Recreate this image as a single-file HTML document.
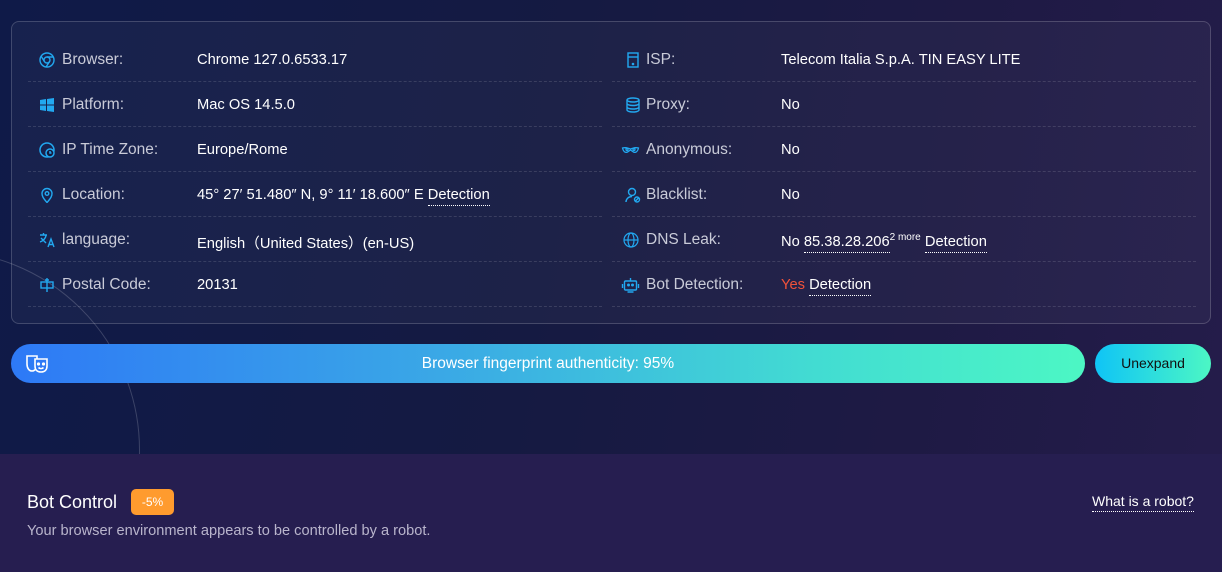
<!DOCTYPE html>
<html><head><meta charset="utf-8"><style>
*{margin:0;padding:0;box-sizing:border-box}
html,body{width:1222px;height:572px;overflow:hidden}
body{font-family:"Liberation Sans",sans-serif;background:#141a3e;position:relative}
.top{position:absolute;left:0;top:0;width:1222px;height:454px;overflow:hidden;background:linear-gradient(100deg,#0f1a48 0%,#151a42 45%,#1e1a44 75%,#241c4a 100%)}
.arc{position:absolute;left:-260px;top:250px;width:400px;height:400px;border:1px solid rgba(255,255,255,.18);border-radius:50%}
.card{position:absolute;left:11px;top:21px;width:1200px;height:303px;border:1px solid rgba(255,255,255,.18);border-radius:8px;background:rgba(255,255,255,.035)}
.row{position:absolute;height:45px;border-bottom:1px dashed rgba(255,255,255,.13);font-size:14.7px;color:#fff}
.row .ic{position:absolute;left:11px;top:15px;width:16px;height:16px}
.row .lb{position:absolute;left:34px;top:14px;color:#c9cbd8;font-size:15.5px}
.row .v{position:absolute;top:15px}
.det{border-bottom:1px dotted #fff;padding-bottom:2px}
.bar{position:absolute;left:11px;top:344px;width:1074px;height:39px;border-radius:20px;background:linear-gradient(90deg,#2e79f6,#3aa8e6 40%,#42dcd2 75%,#4cf7c4);color:#fff;font-size:15.5px;text-align:center;line-height:39px}
.btn{position:absolute;left:1095px;top:344px;width:116px;height:39px;border-radius:20px;background:linear-gradient(90deg,#0fc4f6,#4cf7c4);color:#111;font-size:14px;text-align:center;line-height:39px}
.bot{position:absolute;left:0;top:454px;width:1222px;height:118px;background:#261e50}
</style></head><body>
<div class="top"><div class="arc"></div></div>
<div class="card">
<div class="row" style="left:16px;top:15px;width:574px"><svg class="ic" viewBox="0 0 16 16" fill="none" stroke="#22a8f0" stroke-width="1.4"><circle cx="8" cy="8" r="7"/><circle cx="8" cy="8" r="3"/><path d="M8 5h6.5M5.4 9.5L2 4M10.6 9.5L7 15"/></svg><span class="lb">Browser:</span><span class="v" style="left:169px">Chrome 127.0.6533.17</span></div>
<div class="row" style="left:16px;top:60px;width:574px"><svg class="ic" viewBox="0 0 16 16" fill="#22a8f0"><path d="M1 3l6-1v5.5H1zM8 2l7-1v6.5H8zM1 8.5h6V14l-6-1zM8 8.5h7V15l-7-1z"/></svg><span class="lb">Platform:</span><span class="v" style="left:169px">Mac OS 14.5.0</span></div>
<div class="row" style="left:16px;top:105px;width:574px"><svg class="ic" viewBox="0 0 16 16" fill="none" stroke="#22a8f0" stroke-width="1.5"><circle cx="8" cy="8" r="7"/><circle cx="11" cy="11" r="4" fill="#141a3e"/><path d="M11 9v2h1.5"/></svg><span class="lb">IP Time Zone:</span><span class="v" style="left:169px">Europe/Rome</span></div>
<div class="row" style="left:16px;top:150px;width:574px"><svg class="ic" viewBox="0 0 16 16" fill="none" stroke="#22a8f0" stroke-width="1.4"><path d="M8 15.5C4 11 3 9 3 6.5a5 5 0 0110 0C13 9 12 11 8 15.5z"/><circle cx="8" cy="6.5" r="1.8"/></svg><span class="lb">Location:</span><span class="v" style="left:169px">45° 27′ 51.480″ N, 9° 11′ 18.600″ E <span class="det">Detection</span></span></div>
<div class="row" style="left:16px;top:195px;width:574px"><svg class="ic" viewBox="0 0 16 16" fill="none" stroke="#22a8f0" stroke-width="1.4"><path d="M1 3h7M4.5 1v2M2 6l5 5M7 3c0 3-3 6-6 7M9 15l3-8 3 8M10 12.5h4"/></svg><span class="lb">language:</span><span class="v" style="left:169px">English（United States）(en-US)</span></div>
<div class="row" style="left:16px;top:240px;width:574px"><svg class="ic" viewBox="0 0 16 16" fill="none" stroke="#22a8f0" stroke-width="1.4"><rect x="2" y="5" width="12" height="6"/><path d="M8 1v14M6 3h4"/></svg><span class="lb">Postal Code:</span><span class="v" style="left:169px">20131</span></div>
<div class="row" style="left:600px;top:15px;width:584px"><svg class="ic" viewBox="0 0 16 16" fill="none" stroke="#22a8f0" stroke-width="1.4" style="left:13px"><rect x="3" y="1" width="10" height="14"/><path d="M3 5h10"/><circle cx="8" cy="12" r=".6" fill="#22a8f0"/></svg><span class="lb">ISP:</span><span class="v" style="left:169px">Telecom Italia S.p.A. TIN EASY LITE</span></div>
<div class="row" style="left:600px;top:60px;width:584px"><svg class="ic" viewBox="0 0 16 16" fill="none" stroke="#22a8f0" stroke-width="1.4" style="left:13px"><ellipse cx="8" cy="3" rx="6" ry="2"/><path d="M2 3v10c0 1.1 2.7 2 6 2s6-.9 6-2V3M2 6.5c0 1.1 2.7 2 6 2s6-.9 6-2M2 10c0 1.1 2.7 2 6 2s6-.9 6-2"/></svg><span class="lb">Proxy:</span><span class="v" style="left:169px">No</span></div>
<div class="row" style="left:600px;top:105px;width:584px"><svg class="ic" viewBox="0 0 18 16" fill="none" stroke="#22a8f0" stroke-width="1.3" style="left:9px;width:19px"><path d="M1 6c3-1 5 0 8 1 3-1 5-2 8-1-1 4-3 5-5 4L9 8 6 10C4 11 2 10 1 6z"/><circle cx="5.5" cy="7.5" r="1"/><circle cx="12.5" cy="7.5" r="1"/></svg><span class="lb">Anonymous:</span><span class="v" style="left:169px">No</span></div>
<div class="row" style="left:600px;top:150px;width:584px"><svg class="ic" viewBox="0 0 16 16" fill="none" stroke="#22a8f0" stroke-width="1.4" style="left:13px"><circle cx="7" cy="5" r="3.5"/><path d="M1 15c0-3 2.5-5.5 6-5.5"/><circle cx="12" cy="12.5" r="2.5"/><path d="M10.3 14.2l3.4-3.4"/></svg><span class="lb">Blacklist:</span><span class="v" style="left:169px">No</span></div>
<div class="row" style="left:600px;top:195px;width:584px"><svg class="ic" viewBox="0 0 16 16" fill="none" stroke="#22a8f0" stroke-width="1.2" style="left:11px"><circle cx="8" cy="8" r="7"/><ellipse cx="8" cy="8" rx="3" ry="7"/><path d="M1 8h14"/></svg><span class="lb">DNS Leak:</span><span class="v" style="left:169px">No <span class="det">85.38.28.206</span><sup style="font-size:10px">2 more</sup> <span class="det">Detection</span></span></div>
<div class="row" style="left:600px;top:240px;width:584px"><svg class="ic" viewBox="0 0 18 16" fill="none" stroke="#22a8f0" stroke-width="1.4" style="left:9px;width:19px"><rect x="3" y="4" width="12" height="9" rx="1"/><path d="M9 1v3M1 7v4M17 7v4M6 15h6"/><circle cx="7" cy="8" r=".8" fill="#22a8f0"/><circle cx="11" cy="8" r=".8" fill="#22a8f0"/></svg><span class="lb">Bot Detection:</span><span class="v" style="left:169px"><span style="color:#f0523a">Yes</span> <span class="det">Detection</span></span></div>
</div>
<div class="bar"><svg style="position:absolute;left:14px;top:10px" width="26" height="20" viewBox="0 0 26 20" fill="none" stroke="#fff" stroke-width="1.6"><path d="M2 2h10v8c0 4-2 7-5 7s-5-3-5-7z"/><path d="M10 5h12v7c0 4-2.5 6-6 6s-6-2-6-6z" fill="#2e79f6"/><circle cx="13.5" cy="10" r=".8" fill="#fff"/><circle cx="18.5" cy="10" r=".8" fill="#fff"/><path d="M13.5 13.5c1.5 1.5 3.5 1.5 5 0"/></svg>Browser fingerprint authenticity: 95%</div>
<div class="btn">Unexpand</div>
<div class="bot">
<div style="position:absolute;left:27px;top:38px;font-size:18px;color:#fff">Bot Control</div>
<div style="position:absolute;left:131px;top:35px;width:43px;height:26px;border-radius:5px;background:#ff9b2e;color:#fff;font-size:12px;text-align:center;line-height:26px">-5%</div>
<div style="position:absolute;left:27px;top:69px;font-size:14.6px;color:#b9b5cc">Your browser environment appears to be controlled by a robot.</div>
<div style="position:absolute;left:1092px;top:39px;font-size:14px;color:#fff;border-bottom:1px dotted #fff;padding-bottom:2px">What is a robot?</div>
</div>
</body></html>
